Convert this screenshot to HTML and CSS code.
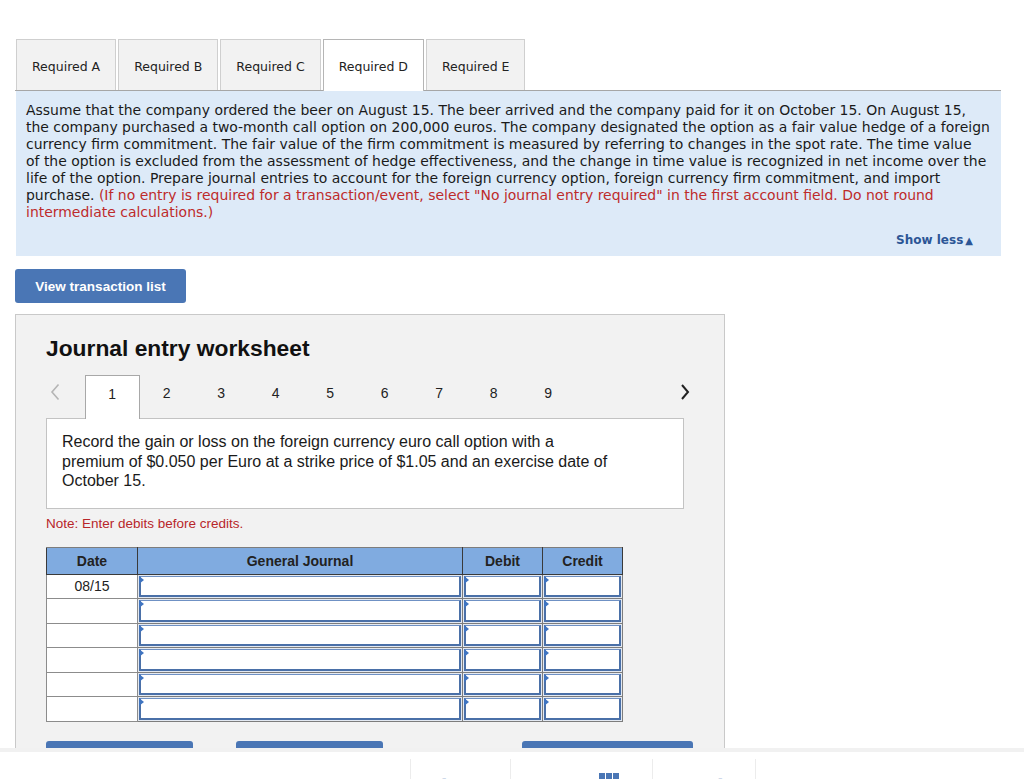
FILE: index.html
```html
<!DOCTYPE html>
<html lang="en">
<head>
<meta charset="utf-8">
<title>Journal entry worksheet</title>
<link rel="stylesheet" href="styles.css">
</head>
<body>
<div class="page">
  <div class="tabs">
    <div class="tab">Required A</div>
    <div class="tab">Required B</div>
    <div class="tab">Required C</div>
    <div class="tab active">Required D</div>
    <div class="tab">Required E</div>
  </div>

  <div class="prompt">
    <p class="prompt-text">Assume that the company ordered the beer on August 15. The beer arrived and the company paid for it on October 15. On August 15, the company purchased a two-month call option on 200,000 euros. The company designated the option as a fair value hedge of a foreign currency firm commitment. The fair value of the firm commitment is measured by referring to changes in the spot rate. The time value<br>of the option is excluded from the assessment of hedge effectiveness, and the change in time value is recognized in net income over the life of the option. Prepare journal entries to account for the foreign currency option, foreign currency firm commitment, and import purchase. <span class="hint">(If no entry is required for a transaction/event, select "No journal entry required" in the first account field. Do not round intermediate calculations.)</span></p>
    <div class="show-less">Show less<span class="caret">&#9650;</span></div>
  </div>

  <button class="btn btn-view">View transaction list</button>

  <section class="worksheet">
    <h2 class="ws-title">Journal entry worksheet</h2>

    <div class="pager">
      <span class="chev chev-prev">
        <svg width="10" height="18" viewBox="0 0 10 18"><path d="M8.5 1.5 L2 9 L8.5 16.5" fill="none" stroke="#b5b5b5" stroke-width="1.6"/></svg>
      </span>
      <div class="pages">
        <span class="pg active">1</span>
        <span class="pg">2</span>
        <span class="pg">3</span>
        <span class="pg">4</span>
        <span class="pg">5</span>
        <span class="pg">6</span>
        <span class="pg">7</span>
        <span class="pg">8</span>
        <span class="pg">9</span>
      </div>
      <span class="chev chev-next">
        <svg width="10" height="18" viewBox="0 0 10 18"><path d="M2 2 L8 9 L2 16" fill="none" stroke="#222" stroke-width="2"/></svg>
      </span>
    </div>

    <div class="record">Record the gain or loss on the foreign currency euro call option with a premium of $0.050 per Euro at a strike price of $1.05 and an exercise date of October 15.</div>

    <div class="note">Note: Enter debits before credits.</div>

    <table class="journal">
      <colgroup>
        <col class="c-date"><col class="c-acct"><col class="c-amt"><col class="c-amt">
      </colgroup>
      <thead>
        <tr><th>Date</th><th>General Journal</th><th>Debit</th><th>Credit</th></tr>
      </thead>
      <tbody>
        <tr><td class="date">08/15</td><td class="inp"><div class="field"></div></td><td class="inp"><div class="field"></div></td><td class="inp"><div class="field"></div></td></tr>
        <tr><td class="date"></td><td class="inp"><div class="field"></div></td><td class="inp"><div class="field"></div></td><td class="inp"><div class="field"></div></td></tr>
        <tr><td class="date"></td><td class="inp"><div class="field"></div></td><td class="inp"><div class="field"></div></td><td class="inp"><div class="field"></div></td></tr>
        <tr><td class="date"></td><td class="inp"><div class="field"></div></td><td class="inp"><div class="field"></div></td><td class="inp"><div class="field"></div></td></tr>
        <tr><td class="date"></td><td class="inp"><div class="field"></div></td><td class="inp"><div class="field"></div></td><td class="inp"><div class="field"></div></td></tr>
        <tr><td class="date"></td><td class="inp"><div class="field"></div></td><td class="inp"><div class="field"></div></td><td class="inp"><div class="field"></div></td></tr>
      </tbody>
    </table>

    <div class="actions">
      <button class="btn btn-record">Record entry</button>
      <button class="btn btn-clear">Clear entry</button>
      <button class="btn btn-general">View general journal</button>
    </div>
  </section>
</div>

<footer class="footer">
  <div class="foot-cell foot-prev"><span class="fi">&#10094;</span> Prev</div>
  <div class="foot-cell foot-count"><span class="fi">4</span> of 4 <span class="grid-ico"><i></i><i></i><i></i></span></div>
  <div class="foot-cell foot-next">Next <span class="fi">&#10095;</span></div>
</footer>
</body>
</html>
```

FILE: styles.css
```css
html, body {
  margin: 0;
  padding: 0;
  background: #fff;
  height: 100%;
  overflow: hidden;
}

body {
  font-family: "DejaVu Sans", Verdana, sans-serif;
  color: #1a1a1a;
}

.page {
  padding: 39px 23px 0 15px;
}

/* ---------- question tabs ---------- */
.tabs {
  display: flex;
  gap: 2px;
  padding-left: 1px;
  width: 985px;
  border-bottom: 1px solid #a6a6a6;
}

.tab {
  height: 51px;
  box-sizing: border-box;
  padding: 3px 15px 0;
  display: flex;
  align-items: center;
  background: #f2f2f2;
  border: 1px solid #cfcfcf;
  border-bottom: none;
  font-size: 12.5px;
  color: #222;
}

.tab.active {
  background: #fff;
  border-color: #b5b5b5;
  height: 52px;
  padding-bottom: 1px;
  margin-bottom: -1px;
}

/* ---------- prompt ---------- */
.prompt {
  margin-left: 1px;
  width: 985px;
  box-sizing: border-box;
  background: #ddeaf8;
  padding: 11px 9px 9px 10px;
  height: 165px;
  display: flex;
  flex-direction: column;
}

.prompt-text {
  margin: 0;
  font-size: 13.96px;
  line-height: 17px;
  color: #1a1a1a;
}

.hint {
  color: #bd2b2b;
}

.show-less {
  margin-top: auto;
  align-self: flex-end;
  padding-right: 19px;
  font-size: 12px;
  font-weight: bold;
  color: #2c5696;
  line-height: 15px;
  transform: translateY(1px);
}

.caret {
  font-size: 10px;
  margin-left: 2px;
}

/* ---------- buttons ---------- */
.btn {
  border: none;
  background: #4a76b5;
  color: #fff;
  font-family: "Liberation Sans", Arial, sans-serif;
  font-weight: bold;
  font-size: 13.5px;
  border-radius: 3px;
  padding: 0;
  flex-shrink: 0;
}

.btn-view {
  display: block;
  margin-top: 13px;
  width: 171px;
  height: 34px;
}

/* ---------- worksheet ---------- */
.worksheet {
  margin-top: 11px;
  width: 710px;
  box-sizing: border-box;
  background: #f2f2f2;
  border: 1px solid #c9c9c9;
  padding: 18px 40px 0 30px;
  height: 460px;
  font-family: "Liberation Sans", Arial, sans-serif;
}

.ws-title {
  margin: 0;
  font-size: 22.8px;
  line-height: 30px;
  font-weight: bold;
  color: #111;
}

.pager {
  margin-top: 12px;
  display: flex;
  align-items: flex-start;
  height: 43px;
}

.chev {
  display: flex;
  align-items: center;
  height: 34px;
}

.chev-prev {
  width: 39px;
  padding-left: 4px;
  box-sizing: border-box;
}

.chev-next {
  margin-left: auto;
  width: 10px;
  margin-right: -6px;
}

.pages {
  display: flex;
}

.pg {
  width: 54.5px;
  height: 43px;
  box-sizing: border-box;
  display: flex;
  align-items: flex-start;
  justify-content: center;
  padding-top: 10px;
  font-size: 14px;
  color: #222;
}

.pg.active {
  background: #fff;
  border: 1px solid #a8a8a8;
  border-bottom: none;
  height: 44px;
  margin-bottom: -1px;
  position: relative;
  z-index: 1;
}

.record {
  background: #fff;
  border: 1px solid #c3c3c3;
  padding: 13px 70px 17px 15px;
  font-size: 16px;
  line-height: 19.5px;
  color: #1a1a1a;
}

.note {
  margin-top: 7px;
  font-size: 13.5px;
  line-height: 16px;
  color: #b8262a;
}

/* ---------- journal table ---------- */
.journal {
  margin-top: 15px;
  border-collapse: collapse;
  width: 577px;
  table-layout: fixed;
  border: 1px solid #7d7d7d;
  background: #fff;
}

.c-date { width: 91px; }
.c-acct { width: 325px; }
.c-amt { width: 80px; }

.journal th {
  background: #80abe0;
  height: 26px;
  padding: 0;
  font-size: 14px;
  font-weight: bold;
  color: #222;
  border: 1px solid #3a3a3a;
  border-top: 1px solid #7d7d7d;
}

.journal td {
  padding: 0;
  border: 1px solid #8c8c8c;
}

.journal td.date {
  text-align: center;
  vertical-align: top;
  padding-top: 3px;
  font-size: 14px;
  color: #222;
}

.journal td.inp {
  border-color: #7d7d7d;
  padding: 1px;
  background: #e3e9f2;
}

.field {
  height: 18.5px;
  background: #fff;
  border: 2px solid #4a70a8;
  border-top: 1px solid #6f91c4;
  position: relative;
}

.field::before {
  content: "";
  position: absolute;
  left: -2px;
  top: -1px;
  border-style: solid;
  border-width: 4px 0 4px 5px;
  border-color: transparent transparent transparent #3f74c0;
}

.actions {
  margin-top: 19px;
  display: flex;
}

.actions .btn {
  height: 30px;
  border-radius: 3px 3px 0 0;
  color: #4a76b5;
}

.btn-record { width: 147px; }
.btn-clear { width: 147px; margin-left: 43px; }
.btn-general { width: 171px; margin-left: 139px; }

/* ---------- footer bar ---------- */
.footer {
  position: fixed;
  left: 0;
  right: 0;
  bottom: 0;
  height: 27px;
  background: #fff;
  border-top: 4px solid #f1f1f1;
  display: flex;
  padding-left: 410px;
  font-family: "Liberation Sans", Arial, sans-serif;
  overflow: hidden;
}

.foot-cell {
  margin-top: 7px;
  border-left: 1px solid #ececec;
  box-sizing: border-box;
  padding-top: 17px;
  font-size: 16px;
  color: #666;
  line-height: 20px;
  white-space: nowrap;
  text-align: center;
}

.foot-prev { width: 100px; }
.foot-count { width: 142px; color: #333; }
.foot-next { width: 104px; border-right: 1px solid #ececec; color: #999; }

.fi {
  color: #3f6fb0;
}

.grid-ico {
  display: inline-flex;
  gap: 1px;
  vertical-align: top;
  margin-top: -3px;
  margin-left: 10px;
}

.grid-ico i {
  display: block;
  width: 6px;
  height: 6px;
  background: #4a76b5;
}
```
